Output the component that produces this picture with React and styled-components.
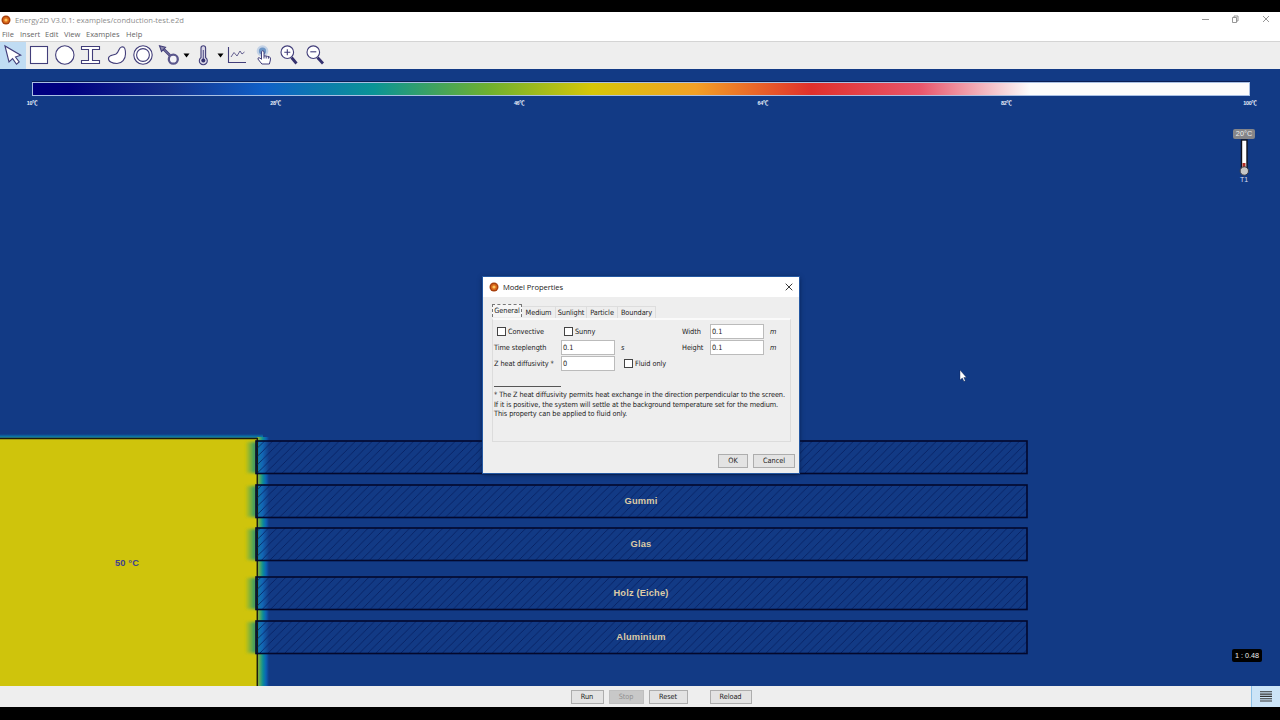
import styled, { createGlobalStyle, css } from "styled-components";

const GlobalStyle = createGlobalStyle`
  * {
    box-sizing: border-box;
  }
  body {
    margin: 0;
    background: #000;
    overflow: hidden;
  }
`;

const ticks = ["10℃", "28℃", "46℃", "64℃", "82℃", "100℃"];

const bars = [
  { top: 441, name: "" },
  { top: 485, name: "Gummi" },
  { top: 528, name: "Glas" },
  { top: 577, name: "Holz (Eiche)" },
  { top: 621, name: "Aluminium" },
];

const menus = [
  ["File", 18],
  ["Insert", 25],
  ["Edit", 19],
  ["View", 22],
  ["Examples", 40],
  ["Help", 20],
];

const tabs = [
  ["Medium", 34],
  ["Sunlight", 31],
  ["Particle", 31],
  ["Boundary", 38],
];

const Logo = () => (
  <svg width="10" height="10" viewBox="0 0 10 10">
    <circle cx="5" cy="5" r="4.5" fill="#a8400c" />
    <circle cx="5" cy="5" r="3.1" fill="#d9691b" />
    <circle cx="5" cy="5" r="1.6" fill="#ffc45c" />
  </svg>
);

const ToolIcons = () => (
  <svg width="330" height="28" viewBox="0 41 330 28" fill="none" stroke="#423e7a" strokeWidth="1.1">
    <path d="M5 46 L9 62 L12.6 58.6 L16.5 64.200 L19.200 62 L15.500 57 L20.700 55.200 Z" fill="#fff" />
    <rect x="30.5" y="46.5" width="17" height="17" fill="#fff" />
    <circle cx="64.8" cy="55" r="9.2" fill="#fff" />
    <path d="M81.500 46.500 H99.500 V49.500 H92.500 V60.500 H99.500 V63.500 H81.500 V60.500 H88.500 V49.500 H81.500 Z" fill="#fff" />
    <path d="M121.500 47 C125 46 125.500 50 125.500 54 C125.500 59 122 63.500 117 63.500 C112 63.500 108 61.500 108.500 58 C109 55 113 55.500 116 54 C119.500 52 118 48 121.500 47 Z" fill="#fff" />
    <circle cx="143" cy="55" r="9.200" fill="#fff" />
    <circle cx="143" cy="55" r="6.400" fill="#fff" />
    <path d="M163.500 49 L170 55.500" strokeWidth="2.600" />
    <path d="M163.500 49 L169.500 55" stroke="#aaa8c4" strokeWidth=".7" />
    <path d="M159.500 45.800 L165.500 47.300 L161.500 51.500 Z" fill="#8b88ab" />
    <circle cx="173.300" cy="59.200" r="4.500" strokeWidth="2.300" stroke="#5b578c" fill="#f4f4f8" />
    <path d="M183.500 53.500 H189.500 L186.500 57.500 Z" fill="#000" stroke="none" />
    <path d="M201 57.500 V48 a2.300 2.300 0 0 1 4.600 0 V57.500 a4 4 0 1 1 -4.600 0 Z" fill="#d8d6e6" />
    <path d="M203.300 50 V59" strokeWidth=".9" />
    <circle cx="203.300" cy="60.500" r="2" fill="#35316f" stroke="none" />
    <path d="M217.500 53.500 H223.500 L220.500 57.500 Z" fill="#000" stroke="none" />
    <path d="M228.500 47 V62.500 H246" />
    <path d="M231 57 L234 52.500 L237 56 L240 51 L242 54 L244.500 52" strokeWidth=".8" />
    <circle cx="262.500" cy="51" r="5.800" fill="#c3d2e6" stroke="none" />
    <circle cx="262.500" cy="51" r="3.600" fill="#6c95c6" stroke="none" />
    <path d="M261.500 51.500 q1.300 -1.500 2.500 0 V56 h2 l1.500 .4 1.500 .3 1.400 1 V60 l-1 4 h-7.500 l-4 -5 q0 -2 2 -1 l1.600 1.300 Z" fill="#fff" strokeWidth="1" />
    <path d="M264 56 v2.500 M266.200 56.300 v2.200 M268.400 56.700 v2" strokeWidth="1" />
    <path d="M291.500 57.500 L296.500 63.500" strokeWidth="2.800" stroke="#35316f" />
    <circle cx="287.300" cy="52.200" r="6.300" fill="#fff" />
    <path d="M284.300 52.200 h6 M287.300 49.200 v6" />
    <path d="M317.500 57.500 L323 63.500" strokeWidth="2.800" stroke="#35316f" />
    <circle cx="313.300" cy="52.200" r="6.300" fill="#fff" />
    <path d="M310.300 51.800 h6" />
  </svg>
);

const HeatField = () => (
  <svg width="1280" height="617" viewBox="0 69 1280 617">
    <defs>
      <linearGradient id="edge">
        <stop offset="0" stopColor="#a9bb20" />
        <stop offset=".25" stopColor="#4fa766" />
        <stop offset=".5" stopColor="#0a8c98" />
        <stop offset=".75" stopColor="#0b62b6" />
        <stop offset="1" stopColor="#123a85" />
      </linearGradient>
      <linearGradient id="edgeTop" x1="0" y1="1" x2="0" y2="0">
        <stop offset="0" stopColor="#5da865" />
        <stop offset=".5" stopColor="#0b72a6" />
        <stop offset="1" stopColor="#123a85" />
      </linearGradient>
      <linearGradient id="inner">
        <stop offset="0" stopColor="#cfc40c" />
        <stop offset=".45" stopColor="#83b434" />
        <stop offset="1" stopColor="#239373" />
      </linearGradient>
      <linearGradient id="barHeat">
        <stop offset="0" stopColor="#1287a5" />
        <stop offset=".5" stopColor="#1265b4" />
        <stop offset="1" stopColor="#123a85" />
      </linearGradient>
      <filter id="soft" x="-50%" y="-20%" width="200%" height="140%">
        <feGaussianBlur stdDeviation="1 1.5" />
      </filter>
      <pattern id="hatch" width="8.300" height="8.300" patternUnits="userSpaceOnUse">
        <path d="M-1 9.300 L9.300 -1 M-1 1 L1 -1 M7.300 9.300 L9.300 7.300" stroke="#051c5c" strokeWidth=".75" />
      </pattern>
    </defs>
    <rect y="69" width="1280" height="617" fill="#123a85" />
    <rect y="434" width="263" height="5" fill="url(#edgeTop)" />
    <rect x="257" y="437" width="12" height="249" fill="url(#edge)" />
    <rect y="438.500" width="257.500" height="260" fill="#cfc40c" />
    {bars.map((bar) => (
      <g key={bar.top}>
        <rect x="245" y={bar.top + 1} width="11" height="31" fill="url(#inner)" filter="url(#soft)" />
        <rect x="256" y={bar.top} width="13" height="33" fill="url(#barHeat)" />
      </g>
    ))}
    <path d="M0 438.500 H257.300 V686" fill="none" stroke="#1a1c10" strokeWidth="1.500" />
    {bars.map((bar) => (
      <g key={bar.top}>
        <rect x="256" y={bar.top} width="771" height="32.500" fill="url(#hatch)" stroke="#03082c" strokeWidth="1.600" />
        <text x="641" y={bar.top + 18.700} fill="#dccba6" textAnchor="middle">
          {bar.name}
        </text>
      </g>
    ))}
    <text x="127" y="566" fill="#41418c" textAnchor="middle">50 °C</text>
    <rect x="1241.500" y="140" width="5.500" height="29" fill="#fff" stroke="#10131f" strokeWidth="1.400" />
    <rect x="1242.500" y="163" width="3" height="5" fill="#b02c24" />
    <circle cx="1244.300" cy="171" r="4.200" fill="#c6c6c6" stroke="#3b3b45" />
    <path d="M960 370 V380 L962.300 378 L964 381.500 L965.300 380.800 L963.800 377.500 H966.500 Z" fill="#fff" stroke="#0b1c46" strokeWidth=".4" />
  </svg>
);

const App = () => (
  <Screen>
    <GlobalStyle />
    <TitleBar>
      <Logo />
      <AppTitle>Energy2D V3.0.1: examples/conduction-test.e2d</AppTitle>
      <svg width="70" height="15" viewBox="0 0 70 15" fill="none" stroke="#8b8b8b" strokeWidth=".9">
        <path d="M2 7.500 h7" />
        <path d="M32.500 5.500 h4 v5 h-4 Z M34 5.500 v-1.500 h4 v5 h-1.500" />
        <path d="M63 4 l6 6 M69 4 l-6 6" />
      </svg>
    </TitleBar>
    <MenuBar>
      {menus.map(([name, width]) => (
        <MenuItem key={name} $width={width}>{name}</MenuItem>
      ))}
    </MenuBar>
    <ToolBar>
      <ToolIcons />
    </ToolBar>
    <Canvas>
      <HeatField />
      <Scale>
        <ScaleBar />
        <Ticks>
          {ticks.map((tick) => (
            <Tick key={tick}><span>{tick}</span></Tick>
          ))}
        </Ticks>
      </Scale>
      <Reading>20°C</Reading>
      <SensorName>T1</SensorName>
      <Clock>1 : 0.48</Clock>
      <Dialog>
        <DialogHead>
          <Logo />
          <DialogTitle>Model Properties</DialogTitle>
          <svg width="8" height="8" viewBox="0 0 8 8" stroke="#222" strokeWidth=".9">
            <path d="M.7 .7 L7.300 7.300 M7.300 .7 L.7 7.300" />
          </svg>
        </DialogHead>
        <DialogBody>
          <TabRow>
            <ActiveTab>General</ActiveTab>
            {tabs.map(([name, width]) => (
              <Tab key={name} $width={width}>{name}</Tab>
            ))}
          </TabRow>
          <Panel>
            <Row>
              <Option $width={67}><Box />Convective</Option>
              <Option $width={121}><Box />Sunny</Option>
              <Label $width={28}>Width</Label>
              <Field>0.1</Field>
              <Unit>m</Unit>
            </Row>
            <Row>
              <Label $width={67}>Time steplength</Label>
              <Field>0.1</Field>
              <Unit $width={61}>s</Unit>
              <Label $width={28}>Height</Label>
              <Field>0.1</Field>
              <Unit>m</Unit>
            </Row>
            <Row>
              <Label $width={67}>Z heat diffusivity *</Label>
              <Field>0</Field>
              <Option $width={80} $indent={9}><Box />Fluid only</Option>
            </Row>
            <Rule />
            <Note>* The Z heat diffusivity permits heat exchange in the direction perpendicular to the screen.</Note>
            <Note>If it is positive, the system will settle at the background temperature set for the medium.</Note>
            <Note $spacing={-0.07}>This property can be applied to fluid only.</Note>
          </Panel>
          <DialogActions>
            <Button $width={30}>OK</Button>
            <Button $width={42}>Cancel</Button>
          </DialogActions>
        </DialogBody>
      </Dialog>
    </Canvas>
    <BottomBar>
      <Controls>
        <Button $width={33}>Run</Button>
        <Button $width={35} $disabled>Stop</Button>
        <Button $width={39}>Reset</Button>
        <Button $width={42} $offset={17}>Reload</Button>
      </Controls>
      <LogToggle>
        <svg width="12" height="11" viewBox="0 0 12 11" stroke="#333" strokeWidth="1.100">
          <path d="M0 .8 h12 M0 3.100 h12 M0 5.400 h12 M0 7.700 h12 M0 10 h12" />
        </svg>
      </LogToggle>
    </BottomBar>
  </Screen>
);

const tahoma = css`
  font-family: "DejaVu Sans Condensed", "DejaVu Sans", sans-serif;
  font-stretch: condensed;
  font-size: 7.3px;
  letter-spacing: -0.06px;
`;

const Screen = styled.div`
  width: 1280px;
  height: 720px;
  padding: 12px 0 13px;
  display: flex;
  flex-direction: column;
  background: #000;
  white-space: nowrap;
`;

const TitleBar = styled.header`
  height: 15px;
  padding: 0 10px 0 1px;
  display: flex;
  align-items: center;
  background: #fff;
  font: 7.6px "Open Sans", sans-serif;
  color: #8d8d8d;
`;

const AppTitle = styled.span`
  flex: 1;
  padding-left: 4px;
`;

const MenuBar = styled.nav`
  height: 14px;
  padding-left: 2px;
  display: flex;
  align-items: center;
  background: #fff;
  font: 7.5px "Open Sans", sans-serif;
  color: #666;
`;

const MenuItem = styled.span`
  width: ${({ $width }) => $width}px;
`;

const ToolBar = styled.div`
  height: 28px;
  display: flex;
  border-top: 1px solid #d4d4d4;
  background: linear-gradient(90deg, #c0dcf3 26px, #eee 26px);
  svg {
    margin-top: -1px;
  }
`;

const Canvas = styled.main`
  position: relative;
  height: 617px;
  background: #123a85;
  svg text {
    font: bold 9.3px "Liberation Sans", sans-serif;
    letter-spacing: 0.15px;
  }
`;

const Scale = styled.div`
  position: absolute;
  top: 13px;
  left: 32px;
  width: 1218px;
`;

const ScaleBar = styled.div`
  height: 14px;
  border: 1px solid #a9c0e4;
  box-shadow: 0 -1px 0 #0a1f55;
  background: linear-gradient(
    90deg,
    #000080 0%,
    #000080 3%,
    #14308a 11%,
    #1060c8 19%,
    #0a9496 28%,
    #6fb02f 37.5%,
    #d6c608 46%,
    #f2a026 54.5%,
    #e0302c 64%,
    #e8566c 73%,
    #fcfcfc 82%
  );
`;

const Ticks = styled.div`
  display: flex;
  justify-content: space-between;
  margin-top: 4px;
`;

const Tick = styled.div`
  width: 0;
  display: flex;
  justify-content: center;
  color: #e6eefb;
  font: bold 5.4px/7px "Liberation Sans", "Noto Sans CJK SC", sans-serif;
  letter-spacing: -0.25px;
`;

const Reading = styled.div`
  position: absolute;
  top: 60px;
  left: 1233px;
  width: 22px;
  height: 10px;
  border-radius: 2px;
  background: #858589;
  color: #eee;
  font: 7.3px/10px "Liberation Sans", sans-serif;
  text-align: center;
`;

const SensorName = styled.div`
  position: absolute;
  top: 106px;
  left: 1240px;
  color: #d5def0;
  font: 7px/9px "Liberation Sans", sans-serif;
`;

const Clock = styled.div`
  position: absolute;
  top: 580px;
  left: 1232px;
  width: 30px;
  height: 13px;
  border-radius: 2px;
  background: #000;
  color: #eee;
  font: 7.2px/13px "Liberation Sans", sans-serif;
  text-align: center;
`;

const Dialog = styled.section`
  position: absolute;
  top: 208px;
  left: 483px;
  width: 316px;
  height: 196px;
  background: #eee;
  box-shadow: 0 0 0 1px #2458a2, 0 1px 5px #06183d;
  color: #222;
  ${tahoma}
`;

const DialogHead = styled.header`
  height: 20px;
  padding: 0 6px 0 6px;
  display: flex;
  align-items: center;
  background: #fff;
`;

const DialogTitle = styled.h1`
  flex: 1;
  margin: 0;
  padding-left: 4px;
  font: 7.6px "Open Sans", sans-serif;
`;

const DialogBody = styled.div`
  padding: 7px 4px 0 9px;
`;

const TabRow = styled.div`
  display: flex;
  align-items: flex-end;
  height: 14px;
`;

const ActiveTab = styled.div`
  width: 30px;
  height: 13px;
  border: 1px dashed #777;
  border-bottom: 0;
  background: #f6f6f6;
  line-height: 11px;
  text-align: center;
  margin-bottom: 1px;
`;

const Tab = styled.div`
  width: ${({ $width }) => $width}px;
  height: 12px;
  border: 1px solid #ddd;
  border-width: 1px 1px 0 0;
  line-height: 11px;
  text-align: center;
`;

const Panel = styled.div`
  width: 299px;
  height: 124px;
  padding: 4px 1px;
  border: 1px solid #dcdcdc;
  border-top: 2px solid #fafafa;
`;

const Row = styled.div`
  display: flex;
  align-items: center;
  height: 15.7px;
`;

const Label = styled.span`
  width: ${({ $width }) => $width}px;
`;

const Option = styled.div`
  width: ${({ $width }) => $width}px;
  padding-left: ${({ $indent = 3 }) => $indent}px;
  display: flex;
  align-items: center;
  gap: 2px;
`;

const Box = styled.i`
  width: 9px;
  height: 9px;
  border: 1px solid #444;
  background: #fff;
`;

const Field = styled.div`
  width: 54px;
  height: 15px;
  padding-left: 1px;
  border: 1px solid #bbb;
  background: #fff;
  line-height: 13px;
  font-family: "DejaVu Sans", sans-serif;
`;

const Unit = styled.span`
  width: ${({ $width = 10 }) => $width}px;
  margin-left: 6px;
  font-style: italic;
`;

const Rule = styled.div`
  width: 67px;
  height: 1px;
  margin: 15px 0 3px;
  background: #555;
`;

const Note = styled.p`
  margin: 0;
  line-height: 9.5px;
  letter-spacing: ${({ $spacing = -0.1 }) => $spacing}px;
`;

const DialogActions = styled.div`
  display: flex;
  justify-content: flex-end;
  gap: 5px;
  padding-top: 12px;
`;

const Button = styled.div`
  width: ${({ $width }) => $width}px;
  height: 14px;
  margin-left: ${({ $offset = 0 }) => $offset}px;
  border: 1px solid ${({ $disabled }) => ($disabled ? "#bfbfbf" : "#adadad")};
  background: ${({ $disabled }) => ($disabled ? "#c8c8c8" : "#e3e3e3")};
  color: ${({ $disabled }) => ($disabled ? "#929292" : "#222")};
  line-height: 12px;
  text-align: center;
  ${tahoma}
`;

const BottomBar = styled.footer`
  height: 21px;
  display: flex;
  align-items: center;
  background: #eee;
`;

const Controls = styled.div`
  flex: 1;
  padding-left: 570.5px;
  display: flex;
  gap: 5px;
`;

const LogToggle = styled.div`
  width: 29px;
  height: 21px;
  display: flex;
  align-items: center;
  justify-content: center;
  border-left: 1px solid #8bbfe6;
  background: #cce4f7;
`;

export default App;
